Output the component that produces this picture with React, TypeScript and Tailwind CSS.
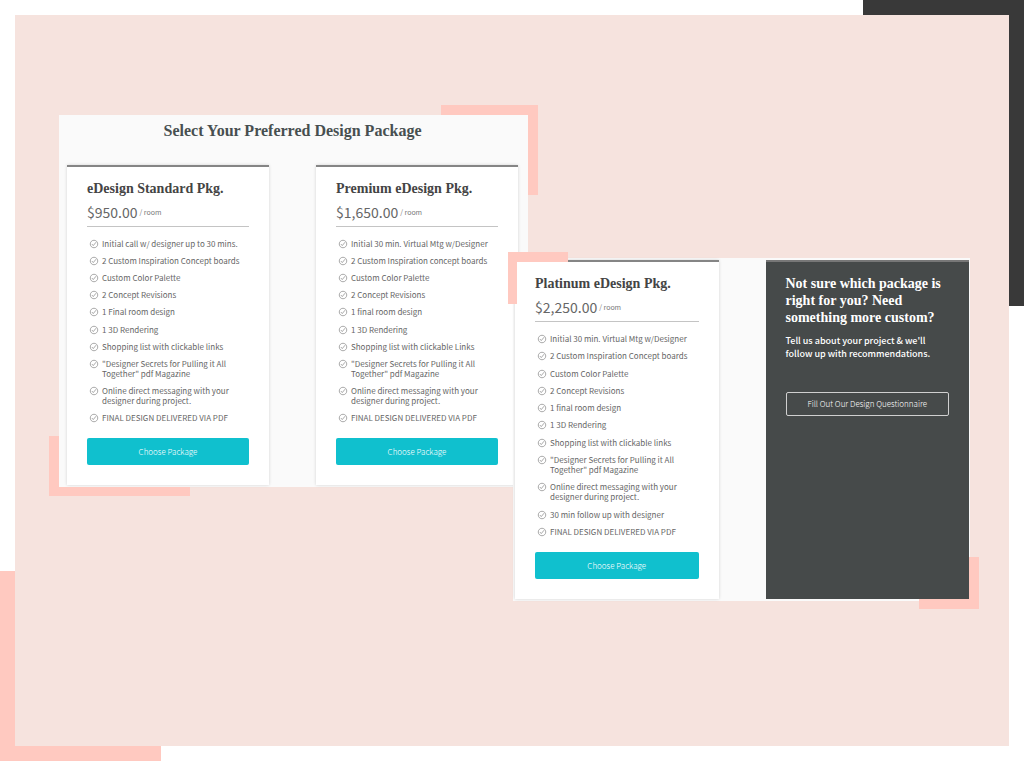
import { IoCheckmarkCircleOutline } from 'react-icons/io5'

const standard = [
	'Initial call w/ designer up to 30 mins.',
	'2 Custom Inspiration Concept boards',
	'Custom Color Palette',
	'2 Concept Revisions',
	'1 Final room design',
	'1 3D Rendering',
	'Shopping list with clickable links',
	'"Designer Secrets for Pulling it All Together" pdf Magazine',
	'Online direct messaging with your designer during project.',
	'FINAL DESIGN DELIVERED VIA PDF',
]

const premium = [
	'Initial 30 min. Virtual Mtg w/Designer',
	'2 Custom Inspiration concept boards',
	'Custom Color Palette',
	'2 Concept Revisions',
	'1 final room design',
	'1 3D Rendering',
	'Shopping list with clickable Links',
	'"Designer Secrets for Pulling it All Together" pdf Magazine',
	'Online direct messaging with your designer during project.',
	'FINAL DESIGN DELIVERED VIA PDF',
]

const platinum = [
	'Initial 30 min. Virtual Mtg w/Designer',
	'2 Custom Inspiration Concept boards',
	'Custom Color Palette',
	'2 Concept Revisions',
	'1 final room design',
	'1 3D Rendering',
	'Shopping list with clickable links',
	'"Designer Secrets for Pulling it All Together" pdf Magazine',
	'Online direct messaging with your designer during project.',
	'30 min follow up with designer',
	'FINAL DESIGN DELIVERED VIA PDF',
]

type PackageCardProps = {
	name: string
	price: string
	features: string[]
}

const PackageCard = ({ name, price, features }: PackageCardProps) => (
	<article className="flex flex-col border-t-2 border-[#858585] bg-white px-5 pb-5 pt-3 shadow-[0_0_3px_rgba(0,0,0,0.16)]">
		<h2 className="whitespace-nowrap font-['Liberation_Serif',serif] text-sm font-bold leading-5 text-[#444444]">
			{name}
		</h2>
		<p className="mt-[3px] flex items-center gap-0.5 border-b border-[#c4c4c4] pb-1 leading-5 text-[#666666]">
			<span className="text-sm">{price}</span>
			<span className="text-[7px] text-[#777777]">/ room</span>
		</p>
		<ul
			className={
				features.length > 10
					? 'mt-3 flex min-h-[203px] flex-col justify-between'
					: 'mt-3 flex min-h-[184px] flex-col justify-between'
			}
		>
			{features.map((feature) => (
				<li
					key={feature}
					className="flex gap-[3px] pl-0.5 text-[8px] leading-[10px] text-[#666666]"
				>
					<IoCheckmarkCircleOutline
						size={10}
						className="shrink-0 text-[#777777]"
					/>
					<span>{feature}</span>
				</li>
			))}
		</ul>
		<button
			type="button"
			className="mt-[15px] h-[27px] rounded-xs bg-[#10c0ce] text-[8px] font-light text-white"
		>
			Choose Package
		</button>
	</article>
)

const App = () => {
	return (
		<div className="relative flex min-h-screen bg-white p-[15px] font-['Noto_Sans_CJK_SC',sans-serif]">
			<div className="absolute right-0 top-0 h-[306px] w-[161px] bg-[#393939]"></div>
			<div className="absolute bottom-0 left-0 h-[190px] w-[161px] bg-[#ffc9c0]"></div>
			<main className="relative grid flex-1 grid-cols-[469fr_442fr] items-start bg-[#f6e3de] pb-10 pl-11 pr-[39px] pt-[100px]">
				<section className="relative bg-[#fafafa] pb-0.5 pl-2 pr-[10px]">
					<div className="absolute -right-[10px] -top-[10px] h-[90px] w-[97px] border-r-[10px] border-t-[10px] border-[#ffc9c0]"></div>
					<div className="absolute -bottom-[9px] -left-[10px] h-[60px] w-[141px] border-b-[9px] border-l-[10px] border-[#ffc9c0]"></div>
					<h1 className="pb-[22px] pt-1 text-center font-['Liberation_Serif',serif] text-base font-bold leading-6 text-[#474f50]">
						Select Your Preferred Design Package
					</h1>
					<div className="grid grid-cols-2 gap-[47px]">
						<PackageCard
							name="eDesign Standard Pkg."
							price="$950.00"
							features={standard}
						/>
						<PackageCard
							name="Premium eDesign Pkg."
							price="$1,650.00"
							features={premium}
						/>
					</div>
				</section>
				<section className="relative -ml-[15px] mt-[143px] bg-[#fafafa] py-0.5 pl-0.5 pr-px">
					<div className="grid grid-cols-2 gap-[47px]">
						<PackageCard
							name="Platinum eDesign Pkg."
							price="$2,250.00"
							features={platinum}
						/>
						<aside className="border-t-2 border-[#777777] bg-[#464a4a] px-5 pt-[13px] text-white">
							<h2 className="whitespace-nowrap font-['Liberation_Serif',serif] text-sm font-bold leading-[17px]">
								Not sure which package is
								<br />
								right for you? Need
								<br />
								something more custom?
							</h2>
							<p className="mt-2 whitespace-nowrap text-[9px] font-medium leading-[13px]">
								Tell us about your project &amp; we'll
								<br />
								follow up with recommendations.
							</p>
							<button
								type="button"
								className="mt-8 h-6 w-full rounded-xs border border-[#d0d0d0] text-[8px] font-light text-white"
							>
								Fill Out Our Design Questionnaire
							</button>
						</aside>
					</div>
					<div className="absolute -left-[5px] -top-[6px] h-[52px] w-[60px] border-l-[9px] border-t-[10px] border-[#ffc9c0]"></div>
					<div className="absolute -bottom-2 -right-[9px] h-[52px] w-[60px] border-b-[10px] border-r-[10px] border-[#ffc9c0]"></div>
				</section>
			</main>
		</div>
	)
}

export default App
